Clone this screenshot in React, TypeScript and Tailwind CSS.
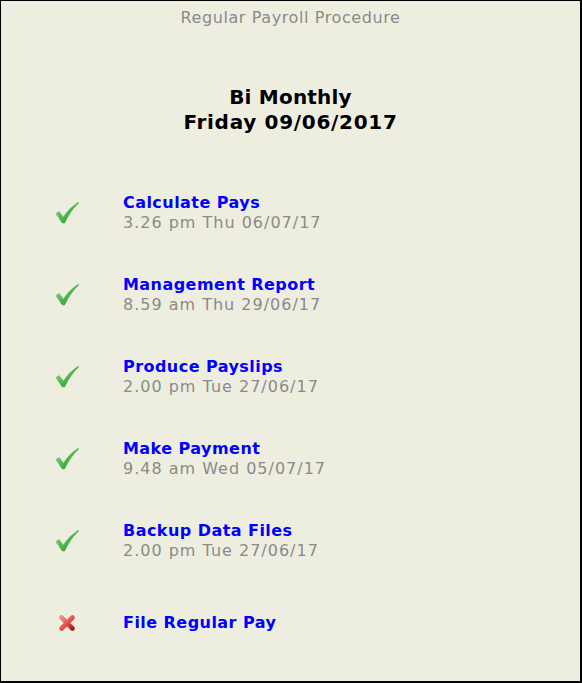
import React from "react";

type Step = { title: string; done: boolean; when?: string };

const steps: Step[] = [
  { title: "Calculate Pays", done: true, when: "3.26 pm Thu 06/07/17" },
  { title: "Management Report", done: true, when: "8.59 am Thu 29/06/17" },
  { title: "Produce Payslips", done: true, when: "2.00 pm Tue 27/06/17" },
  { title: "Make Payment", done: true, when: "9.48 am Wed 05/07/17" },
  { title: "Backup Data Files", done: true, when: "2.00 pm Tue 27/06/17" },
  { title: "File Regular Pay", done: false },
];

function CheckIcon() {
  return (
    <svg width="24" height="24" viewBox="0 0 24 24">
      <defs>
        <linearGradient id="chk" x1="0" y1="0" x2="1" y2="1">
          <stop offset="0" stopColor="#9be09b" />
          <stop offset="0.5" stopColor="#4cbb4c" />
          <stop offset="1" stopColor="#23862b" />
        </linearGradient>
      </defs>
      <path
        d="M1 12.5 L4.2 10.6 L8.3 16.2 Q14 7 23.2 1.2 L23.6 2 Q15.5 9.5 9.6 22 L7.2 22 Z"
        fill="url(#chk)"
        stroke="#3a9a3a"
        strokeWidth="0.4"
      />
    </svg>
  );
}

function CrossIcon() {
  return (
    <svg width="18" height="18" viewBox="0 0 18 18">
      <defs>
        <linearGradient id="crs" x1="0" y1="0" x2="1" y2="1">
          <stop offset="0" stopColor="#f28a8a" />
          <stop offset="0.6" stopColor="#df4a4a" />
          <stop offset="1" stopColor="#b01818" />
        </linearGradient>
      </defs>
      <path
        d="M3.5 3.5 L14.5 14.5 M14.5 3.5 L3.5 14.5"
        stroke="url(#crs)"
        strokeWidth="4.6"
        strokeLinecap="round"
      />
    </svg>
  );
}

export default function App() {
  return (
    <div
      className="w-[582px] h-[683px] bg-[#eeeee0] border-t border-l border-r-2 border-b-2 border-black flex flex-col"
      style={{ fontFamily: "'DejaVu Sans', Verdana, sans-serif" }}
    >
      <div className="pt-[7px] text-center text-[16px] leading-[20px] tracking-[0.6px] text-[#8a8a8a]">
        Regular Payroll Procedure
      </div>

      <div className="mt-[57px] text-center text-[20px] leading-[25px] tracking-[0.7px] font-bold text-black">
        <div className="tracking-[0.2px]">Bi Monthly</div>
        <div>Friday 09/06/2017</div>
      </div>

      <div className="mt-[37px] flex flex-col">
        {steps.map((s) => (
          <div key={s.title} className="h-[82px] flex items-center">
            <div className="ml-[53px] w-[26px] flex justify-center">
              {s.done ? <CheckIcon /> : <CrossIcon />}
            </div>
            <div className="ml-[43px] leading-[20px] text-[16px]">
              <div className="font-bold tracking-[0.45px] text-[#0000ff]">{s.title}</div>
              {s.when && (
                <div className="tracking-[1px] text-[#8a8a8a]">{s.when}</div>
              )}
            </div>
          </div>
        ))}
      </div>
    </div>
  );
}
